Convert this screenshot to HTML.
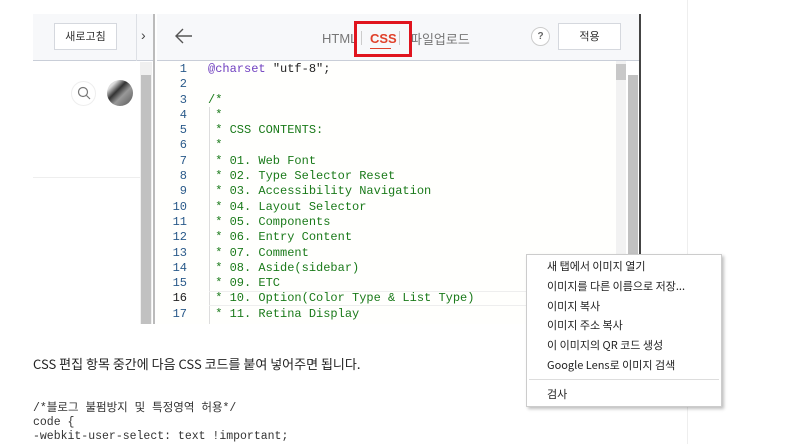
<!DOCTYPE html>
<html><head><meta charset="utf-8"><style>
*{margin:0;padding:0;box-sizing:border-box}
body{width:800px;height:444px;background:#fff;position:relative;overflow:hidden;font-family:"Liberation Sans","Noto Sans CJK KR",sans-serif}
.a{position:absolute}
.code{font-family:"Liberation Mono","Noto Sans CJK KR",monospace;font-size:12px;color:#1a7a1a;white-space:pre}
.ln{font-family:"Liberation Mono",monospace;font-size:12px;color:#2a5a8a;width:30px;text-align:right}
.menu div{height:19.8px;line-height:19.8px;font-size:11px;color:#222;padding-left:20px;font-family:"Noto Sans CJK KR",sans-serif}
</style></head><body>
<div class="a" style="left:687px;top:0;width:1px;height:444px;background:#eee"></div>
<div class="a" style="left:33px;top:14px;width:120px;height:47px;background:#f7f8fa;border-bottom:1px solid #c9ced8"></div>
<div class="a" style="left:54px;top:23px;width:63px;height:27px;background:#fff;border:1px solid #d5d8de;font-size:11px;text-align:center;line-height:25px;color:#333;font-family:'Noto Sans CJK KR',sans-serif">새로고침</div>
<div class="a" style="left:136px;top:14px;width:1px;height:47px;background:#dde0e5"></div>
<div class="a" style="left:141px;top:27px;font-size:14px;color:#444">›</div>
<div class="a" style="left:153px;top:14px;width:2px;height:310px;background:#bbb"></div>
<div class="a" style="left:71px;top:81px;width:25px;height:25px;border:1px solid #eee;border-radius:50%"></div>
<svg class="a" style="left:77px;top:86px" width="14" height="14"><circle cx="6" cy="6" r="4.5" fill="none" stroke="#777" stroke-width="1.2"/><line x1="9.5" y1="9.5" x2="13" y2="13" stroke="#777" stroke-width="1.2"/></svg>
<div class="a" style="left:107px;top:80px;width:26px;height:26px;border-radius:50%;background:linear-gradient(135deg,#ddd 20%,#333 40%,#999 60%,#555)"></div>
<div class="a" style="left:33px;top:177px;width:107px;height:1px;background:#eee"></div>
<div class="a" style="left:140px;top:62px;width:12px;height:262px;background:#f0f0f0"></div>
<div class="a" style="left:141px;top:75px;width:10px;height:249px;background:#c1c1c1"></div>
<div class="a" style="left:157px;top:14px;width:483px;height:47px;background:#f7f8fa;border-bottom:1px solid #c9ced8"></div>
<svg class="a" style="left:175px;top:28px" width="18" height="16"><path d="M17 8H2M8 1L1 8l7 7" fill="none" stroke="#555" stroke-width="1.4"/></svg>
<div class="a" style="left:322px;top:31px;font-size:13px;color:#777">HTML</div>
<div class="a" style="left:361px;top:31px;width:1px;height:14px;background:#ccc"></div>
<div class="a" style="left:370px;top:31px;font-size:13px;color:#e0402a;font-weight:bold">CSS</div>
<div class="a" style="left:370px;top:48px;width:21px;height:1px;background:#e0402a"></div>
<div class="a" style="left:399px;top:31px;width:1px;height:14px;background:#ccc"></div>
<div class="a" style="left:410px;top:29px;font-size:13px;color:#777;font-family:'Noto Sans CJK KR',sans-serif">파일업로드</div>
<div class="a" style="left:354px;top:21px;width:58px;height:36px;border:3px solid #e0141e"></div>
<div class="a" style="left:531px;top:27px;width:19px;height:19px;border:1px solid #ccc;border-radius:50%;background:#fff;font-size:10px;text-align:center;line-height:17px;color:#666;font-weight:bold">?</div>
<div class="a" style="left:558px;top:23px;width:63px;height:27px;background:#fff;border:1px solid #d5d8de;font-size:11px;text-align:center;line-height:25px;color:#333;font-family:'Noto Sans CJK KR',sans-serif">적용</div>
<div class="a" style="left:157px;top:61px;width:459px;height:263px;background:#fffffd"></div>
<div class="a" style="left:616px;top:61px;width:24px;height:263px;background:#fff"></div>
<div class="a" style="left:616px;top:61px;width:10px;height:263px;background:#f2f2f2"></div>
<div class="a" style="left:616px;top:64px;width:10px;height:16px;background:#c8c8c8"></div>
<div class="a" style="left:628px;top:75px;width:10px;height:249px;background:#c1c1c1"></div>
<div class="a" style="left:639px;top:14px;width:2px;height:310px;background:#444"></div>
<div class="a" style="left:209px;top:107px;width:1px;height:217px;background:#ddd"></div>
<div class="a" style="left:209px;top:291px;width:407px;height:15px;border-top:1px solid #eee;border-bottom:1px solid #eee"></div>
<div class="a" style="left:157px;top:62px;line-height:15.3px">
<div class="ln">1</div><div class="ln">2</div><div class="ln">3</div><div class="ln">4</div><div class="ln">5</div><div class="ln">6</div><div class="ln">7</div><div class="ln">8</div><div class="ln">9</div><div class="ln">10</div><div class="ln">11</div><div class="ln">12</div><div class="ln">13</div><div class="ln">14</div><div class="ln">15</div><div class="ln" style="color:#222">16</div><div class="ln">17</div></div>
<div class="a code" style="left:208px;top:62px;line-height:15.3px"><span style="color:#7040c0">@charset</span> <span style="color:#222">"utf-8";</span>

<span style="color:#1a7a1a">/*</span>
 *
 * CSS CONTENTS:
 *
 * 01. Web Font
 * 02. Type Selector Reset
 * 03. Accessibility Navigation
 * 04. Layout Selector
 * 05. Components
 * 06. Entry Content
 * 07. Comment
 * 08. Aside(sidebar)
 * 09. ETC
 * 10. Option(Color Type &amp; List Type)
 * 11. Retina Display</div>
<div class="a" style="left:33px;top:354px;font-size:13px;color:#222;font-family:'Noto Sans CJK KR',sans-serif">CSS 편집 항목 중간에 다음 CSS 코드를 붙여 넣어주면 됩니다.</div>
<div class="a code" style="left:33px;top:402px;color:#333;font-size:11.5px;line-height:14px">/*블로그 불펌방지 및 특정영역 허용*/
code {
-webkit-user-select: text !important;</div>
<div class="a menu" style="left:526px;top:254px;width:196px;height:153px;background:#fff;border:1px solid #ccc;box-shadow:2px 2px 3px rgba(0,0,0,.25);padding-top:2px">
<div>새 탭에서 이미지 열기</div>
<div>이미지를 다른 이름으로 저장...</div>
<div>이미지 복사</div>
<div>이미지 주소 복사</div>
<div>이 이미지의 QR 코드 생성</div>
<div>Google Lens로 이미지 검색</div>
<div style="height:4px;border-bottom:1px solid #ddd;margin:0 2px 5px 2px;padding:0"></div>
<div>검사</div>
</div>
</body></html>
